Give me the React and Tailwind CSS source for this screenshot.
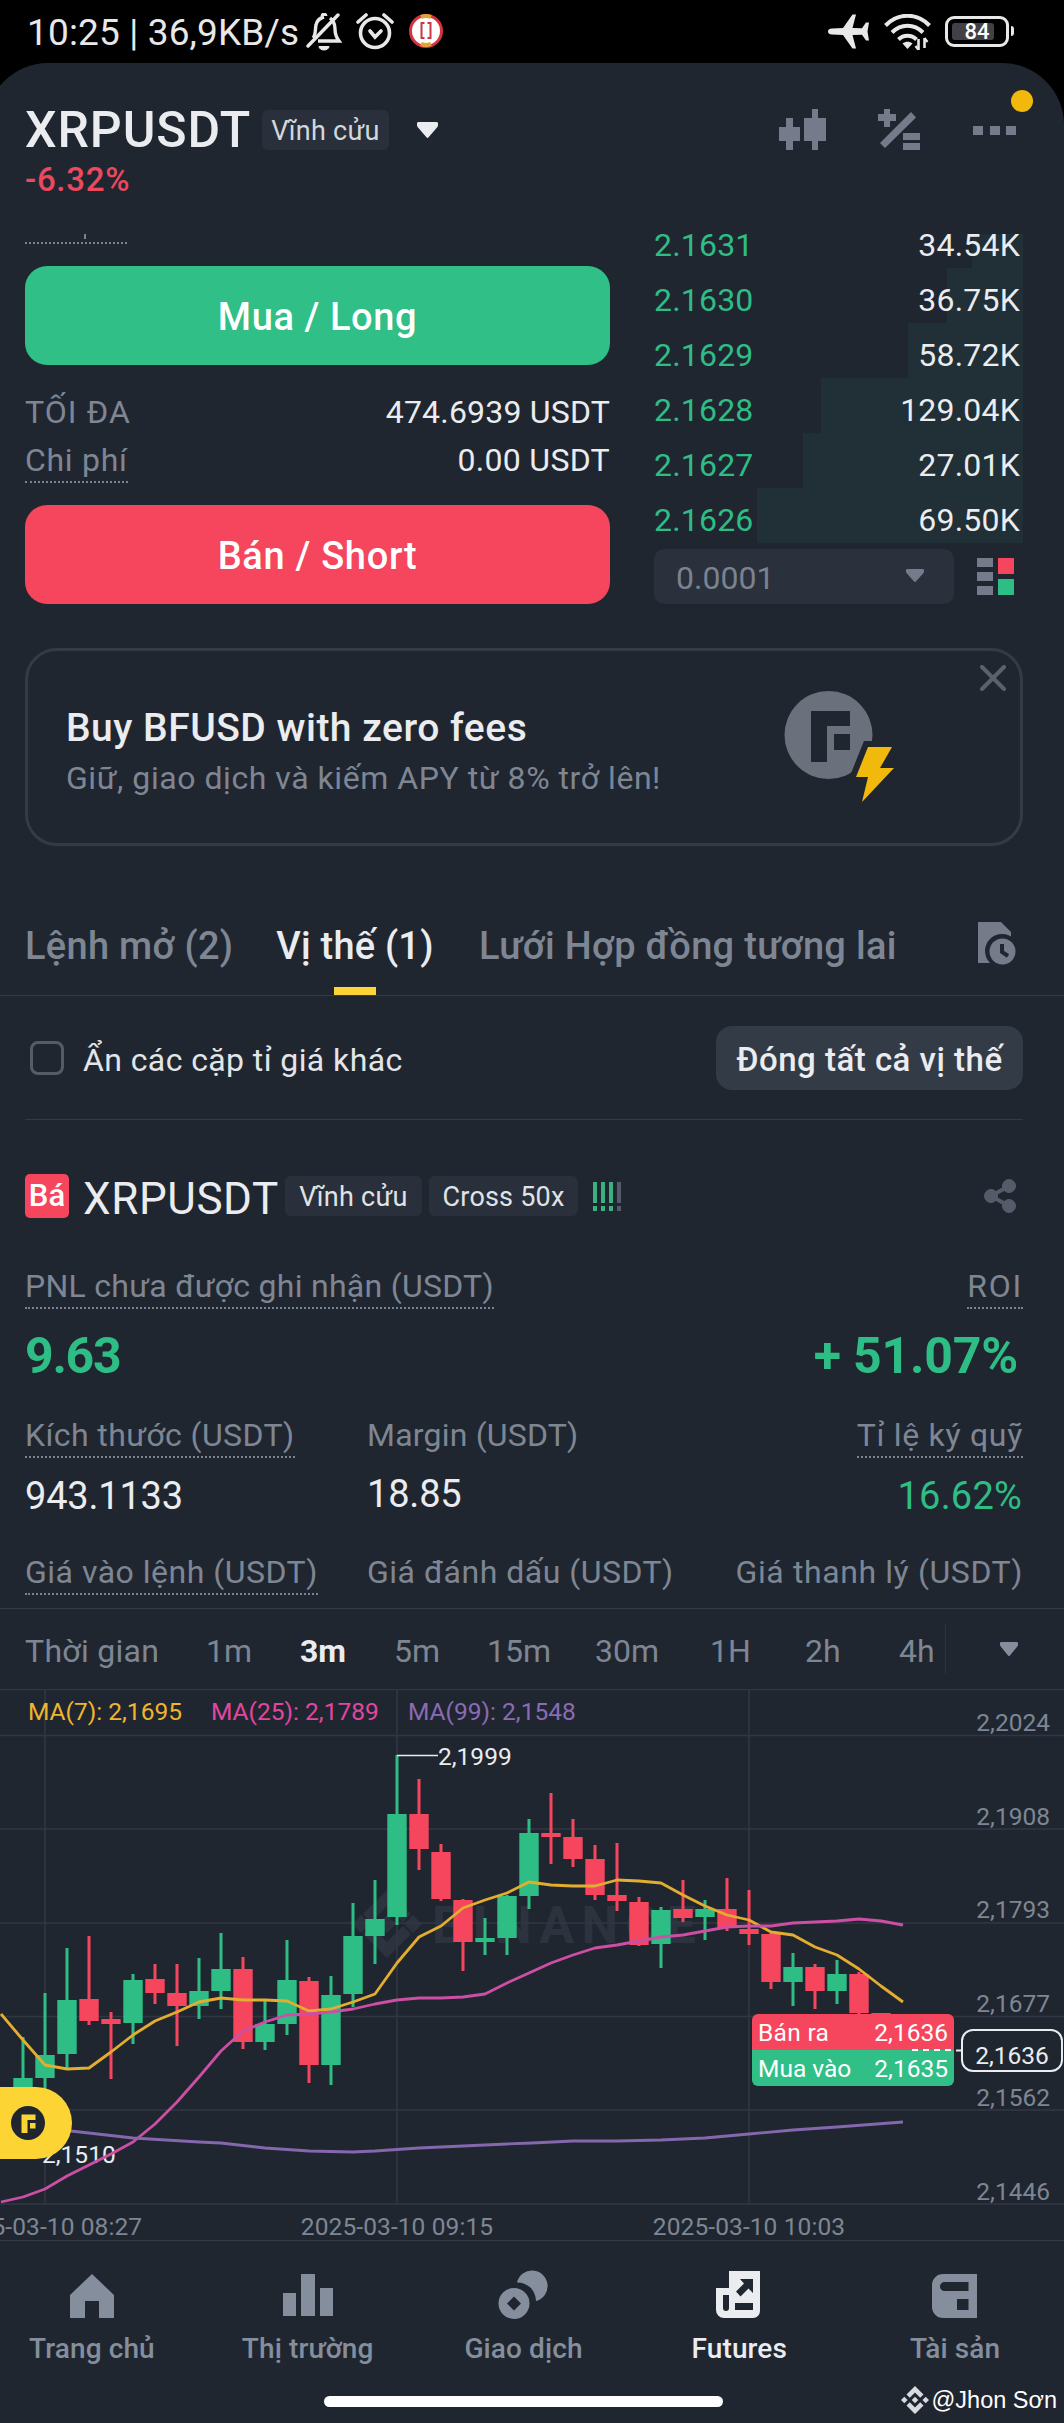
import clsx from 'clsx'

const bids = [
  { price: '2.1631', amount: '34.54K', depth: 51 },
  { price: '2.1630', amount: '36.75K', depth: 76 },
  { price: '2.1629', amount: '58.72K', depth: 115 },
  { price: '2.1628', amount: '129.04K', depth: 202 },
  { price: '2.1627', amount: '27.01K', depth: 220 },
  { price: '2.1626', amount: '69.50K', depth: 266 }
]

const intervals = [
  { label: 'Thời gian', width: 'w-[181px] tracking-[0.300px]' },
  { label: '1m', width: 'w-[94px]' },
  { label: '3m', width: 'w-[94px]', active: true },
  { label: '5m', width: 'w-[93px]' },
  { label: '15m', width: 'w-[108px]' },
  { label: '30m', width: 'w-[115px]' },
  { label: '1H', width: 'w-[95px]' },
  { label: '2h', width: 'w-[94px]' },
  { label: '4h', width: 'w-[46px]' }
]

// [high, body top, body bottom, low, up]
const candles = [
  [2037, 2078, 2098, 2100, 1],
  [1993, 2055, 2078, 2096, 1],
  [1948, 2000, 2054, 2069, 1],
  [1936, 1999, 2021, 2025, 0],
  [2012, 2019, 2024, 2079, 0],
  [1974, 1980, 2023, 2044, 1],
  [1964, 1979, 1993, 2004, 0],
  [1964, 1993, 2006, 2046, 0],
  [1958, 1991, 2006, 2019, 1],
  [1933, 1969, 1991, 2009, 1],
  [1957, 1969, 2042, 2049, 0],
  [1999, 2024, 2042, 2050, 1],
  [1940, 1980, 2024, 2035, 1],
  [1977, 1981, 2065, 2083, 0],
  [1976, 1995, 2065, 2085, 1],
  [1903, 1936, 1994, 2007, 1],
  [1880, 1919, 1936, 1964, 1],
  [1755, 1814, 1917, 1925, 1],
  [1779, 1814, 1849, 1870, 0],
  [1844, 1852, 1899, 1901, 0],
  [1899, 1900, 1942, 1971, 0],
  [1918, 1938, 1942, 1955, 1],
  [1895, 1896, 1938, 1955, 1],
  [1819, 1833, 1896, 1909, 1],
  [1793, 1833, 1837, 1864, 0],
  [1819, 1837, 1859, 1867, 0],
  [1845, 1859, 1895, 1900, 0],
  [1843, 1895, 1901, 1911, 0],
  [1897, 1902, 1945, 1946, 0],
  [1907, 1910, 1944, 1968, 1],
  [1880, 1909, 1918, 1922, 0],
  [1900, 1909, 1917, 1940, 1],
  [1878, 1909, 1928, 1931, 0],
  [1890, 1929, 1934, 1945, 0],
  [1933, 1934, 1982, 1989, 0],
  [1953, 1967, 1982, 2006, 1],
  [1964, 1967, 1991, 2009, 0],
  [1960, 1974, 1991, 2004, 1],
  [1972, 1974, 2013, 2015, 0],
  [2013, 2013, 2018, 2018, 0]
]

const ma7 = [
  2014, 2040, 2065, 2069, 2068, 2052, 2035, 2021, 2012, 2002, 1998, 2000, 2000, 2001, 2011, 2009,
  2002, 1994, 1963, 1937, 1926, 1908, 1900, 1893, 1882, 1885, 1886, 1886, 1880, 1881, 1883, 1895,
  1906, 1915, 1920, 1932, 1935, 1947, 1955, 1969, 1986, 2002
]

const ma25 = [
  2202, 2197, 2189, 2176, 2165, 2154, 2142, 2124, 2102, 2077, 2051, 2031, 2022, 2015, 2014, 2012,
  2009, 2004, 2000, 1998, 1998, 1997, 1994, 1983, 1973, 1963, 1955, 1948, 1945, 1941, 1937, 1935,
  1931, 1927, 1926, 1926, 1923, 1922, 1921, 1919, 1921, 1925
]

const ma99 =
  '60,2129 71,2131 133,2138 199,2142 221,2143 265,2148 309,2151 353,2152 375,2151 419,2148 463,2146 507,2144 532,2143 573,2141 617,2141 661,2140 705,2138 749,2134 793,2130 837,2127 903,2122'

const gridLines = [1735.5, 1829, 1923, 2016.5, 2110, 2204]

const axisLabels = [
  { text: '2,2024', y: 1731 },
  { text: '2,1908', y: 1825 },
  { text: '2,1793', y: 1918 },
  { text: '2,1677', y: 2012 },
  { text: '2,1562', y: 2106 },
  { text: '2,1446', y: 2200 }
]

const toPoints = (values) => values.map((y, i) => `${1 + i * 22},${y}`).join(' ')

const Caret = ({ className }) => (
  <svg viewBox="0 0 21 16" className={className} fill="currentColor" preserveAspectRatio="none">
    <path d="M1.5 0h18a1.5 1.5 0 0 1 1.5 1.6v1.6a3 3 0 0 1-.8 2L11.6 15.3a1.5 1.5 0 0 1-2.2 0L.8 5.2a3 3 0 0 1-.8-2V1.6A1.5 1.5 0 0 1 1.5 0z" />
  </svg>
)

const StatusBar = () => (
  <div className="flex h-[63px] items-start text-[#e8e8e8]">
    <span className="ml-[27px] mt-[3px] w-[279px] whitespace-nowrap text-[37px] leading-[60px] tracking-[0.150px]">10:25 | 36,9KB/s</span>
    <svg viewBox="0 0 36 38" className="mt-[13px] h-[38px] w-[36px]" fill="none" stroke="currentColor" strokeWidth="3.4">
      <path d="M7 25c3-3 2-9 3-13 1-5 4-7 8-8M24 5c4 3 5 6 5 11 0 5 1 8 4 12H12" />
      <path d="M32 2 2 33" strokeLinecap="round" />
      <path d="M15 3a3 3 0 0 1 6 0M13 33.5a5 3.5 0 0 0 10 0z" fill="currentColor" strokeWidth="1" />
    </svg>
    <svg viewBox="0 0 40 38" className="ml-[13px] mt-[13px] h-[38px] w-[40px]" fill="none" stroke="currentColor" strokeWidth="3.6" strokeLinecap="round">
      <circle cx="20" cy="20" r="14.5" />
      <path d="M3 9l8-7M37 9l-8-7" />
      <path d="M15 18l5 6 6-6" />
    </svg>
    <svg viewBox="0 0 34 34" className="ml-[14px] mt-[14px] h-[34px] w-[34px]">
      <circle cx="17" cy="17" r="15.5" fill="#fff" stroke="#d6343d" strokeWidth="3" />
      <path d="M12 3a15 15 0 0 1 10 0M12 30a15 15 0 0 0 10 0" stroke="#e0a23c" strokeWidth="4" fill="none" />
      <path d="M15.500 9h-3v15h3M18.500 9h3v15h-3" stroke="#c63a40" strokeWidth="2" fill="none" />
    </svg>

    <svg viewBox="0 0 41 35" className="ml-auto mt-[14px] h-[35px] w-[41px]" fill="currentColor">
      <path d="M0 17.500c0-2 1.500-3 4-3L15 14 24.500 0.500H28L24.500 14l9.500.3 4-5.800h3L39.500 17.500 41 26.500h-3l-4-5.800-9.500.3L28 34.500h-3.500L15 21 4 20.500c-2.500 0-4-1-4-3z" />
    </svg>
    <svg viewBox="0 0 47 36" className="ml-[15px] mt-[14px] h-[36px] w-[47px]" fill="none" stroke="currentColor" strokeWidth="4">
      <path d="M1.500 11.500C14-1.500 33-1.500 45.500 11.500" />
      <path d="M8 18.500c9-9 22-9 31 0" />
      <path d="M14.500 25.500c5-5 13-5 18 0" />
      <path d="M23.500 35l-5-5.500c3-2.500 7-2.500 10 0z" fill="currentColor" stroke="none" />
      <path d="M34.500 25v11M40.500 24v10" strokeWidth="2.600" />
      <path d="M31.500 32l3 4M43.500 28l-3-4" strokeWidth="2.200" />
    </svg>
    <div className="ml-[14px] mt-[16px] flex h-[31px] w-[64px] items-center rounded-[9px] border-[3px] border-[#e8e8e8] p-[4px]">
      <div className="flex h-full w-[42px] items-center justify-center rounded-[3px] bg-[#433f47] pl-2 text-[22px] font-medium leading-none text-white">
        84
      </div>
    </div>
    <div className="ml-[2px] mr-[50px] mt-[26px] h-[10px] w-[3px] rounded-r bg-[#e8e8e8]" />
  </div>
)

const Header = () => (
  <header className="relative -ml-[14px] h-[171px] w-[1078px] rounded-t-[62px] bg-[#202630] pl-[39px] pt-[37px]">
    <div className="flex h-[60px] items-center">
      <h1 className="w-[237px] whitespace-nowrap text-[50px] font-medium leading-[60px] tracking-[0.900px] text-[#eaecef]">XRPUSDT</h1>
      <span className="h-10 w-[127px] rounded-md bg-[#29303b] text-center text-[27px] leading-[42px] tracking-[0.300px] text-[#d3d7dc]">Vĩnh cửu</span>
      <Caret className="ml-[28px] h-4 w-[21px] text-[#eaecef]" />
      <svg viewBox="0 0 47 42" className="ml-auto h-[42px] w-[47px] text-[#757b8a]" fill="currentColor">
        <path d="M0 18h7V9h7v9h7v14h-7v9H7v-9H0zM25 9h8V0h6v9h8v23h-8v9h-6v-9h-8z" />
      </svg>
      <svg viewBox="0 0 42 42" className="ml-[52px] h-[42px] w-[42px] text-[#757b8a]" fill="currentColor">
        <path d="M6 0h6v5h6v7h-6v6H6v-6H0V5h6zM33 3l5 5.500L7 39l-5-5zM25 24h17v7H25zM25 34h17v7H25z" />
      </svg>
      <div className="ml-[53px] mr-[48px] flex w-[43px] justify-between">
        <i className="h-[9px] w-[10px] bg-[#757b8a]" />
        <i className="h-[9px] w-[10px] bg-[#757b8a]" />
        <i className="h-[9px] w-[10px] bg-[#757b8a]" />
      </div>
    </div>
    <div className="mt-1 text-[33px] font-medium leading-8 tracking-[0.700px] text-[#ec485e]">-6.32%</div>
    <i className="absolute right-[31px] top-[27px] size-[22px] rounded-full bg-[#f0b90b]" />
  </header>
)

const OrderForm = () => (
  <div className="w-[585px]">
    <div className="h-[10px] w-[102px] border-b-2 border-dotted border-[#7b8392]">
      <div className="ml-[59px] h-[5px] w-[2px] bg-[#7b8392]" />
    </div>
    <button className="mt-[22px] block h-[99px] w-full rounded-[22px] bg-[#2fbf87] pt-[3px] text-[38px] font-medium tracking-[0.600px] text-white">
      Mua / Long
    </button>
    <div className="mt-[31px] flex justify-between text-[32px] leading-8">
      <span className="tracking-[1.100px] text-[#7e8694]">TỐI ĐA</span>
      <span className="tracking-[0.200px] text-[#eaecef]">474.6939 USDT</span>
    </div>
    <div className="mt-4 flex h-[39px] justify-between text-[32px] leading-8">
      <span className="border-b-2 border-dotted border-[#7b8392] tracking-[0.700px] text-[#7e8694]">Chi phí</span>
      <span className="tracking-[0.300px] text-[#eaecef]">0.00 USDT</span>
    </div>
    <button className="mt-[22px] block h-[99px] w-full rounded-[22px] bg-[#f6465d] pt-[3px] text-[38px] font-medium tracking-[0.700px] text-white">
      Bán / Short
    </button>
  </div>
)

const OrderBook = () => (
  <div className="w-[369px]">
    <div className="h-[309px] overflow-hidden">
      <div className="-mt-[21px]">
        {bids.map((bid) => (
          <div key={bid.price} className="relative h-[55px]">
            <div className="absolute inset-y-0 right-0 bg-[#212f36]" style={{ width: bid.depth }} />
            <div className="relative flex justify-between pr-[3px] pt-[21px] text-[32px] leading-[22px]">
              <span className="tracking-[0.200px] text-[#2ebd85]">{bid.price}</span>
              <span className="tracking-[0.200px] text-[#eaecef]">{bid.amount}</span>
            </div>
          </div>
        ))}
      </div>
    </div>
    <div className="mt-[6px] flex h-[55px] items-center">
      <div className="flex h-full w-[300px] items-center justify-between rounded-[10px] bg-[#2a303c] pl-[22px] pr-[30px] pt-[2px] text-[32px] text-[#7b8290]">
        0.0001
        <Caret className="mb-[4px] h-[13px] w-[18px] text-[#757b8a]" />
      </div>
      <div className="ml-[23px] flex gap-[5px]">
        <div className="flex flex-col gap-[5px]">
          <i className="h-[9px] w-4 bg-[#757b8a]" />
          <i className="h-[9px] w-4 bg-[#757b8a]" />
          <i className="h-[9px] w-4 bg-[#757b8a]" />
        </div>
        <div className="flex flex-col gap-[5px]">
          <i className="h-4 w-4 bg-[#f6465d]" />
          <i className="h-4 w-4 bg-[#2ebd85]" />
        </div>
      </div>
    </div>
  </div>
)

const PromoCard = () => (
  <div className="relative ml-[25px] flex h-[198px] w-[998px] rounded-[32px] border-[3px] border-[#333b47]">
    <div className="flex-1 whitespace-nowrap pl-[38px] pt-[52px]">
      <h2 className="text-[39px] font-medium leading-[50px] tracking-[0.500px] text-[#eaecef]">Buy BFUSD with zero fees</h2>
      <p className="mt-[5px] text-[32px] leading-10 tracking-[0.550px] text-[#7e8694]">Giữ, giao dịch và kiếm APY từ 8% trở lên!</p>
    </div>
    <svg viewBox="784 690 112 114" className="mr-[124px] mt-[39px] h-[114px] w-[112px]">
      <circle cx="828.500" cy="735" r="44" fill="#6a707c" />
      <path d="M811 711h39v15h-23v36h-16zM834 734h16v16h-16z" fill="#202630" />
      <path d="M868 747h24l-12 21h14l-32 34 6-25h-12z" fill="#f0b90b" stroke="#202630" strokeWidth="12" />
      <path d="M868 747h24l-12 21h14l-32 34 6-25h-12z" fill="#f0b90b" />
    </svg>
    <svg viewBox="0 0 26 26" className="absolute right-[14px] top-[14px] size-[26px]" stroke="#5a616d" strokeWidth="4" strokeLinecap="round">
      <path d="M2 2l22 22M24 2L2 24" />
    </svg>
  </div>
)

const Tabs = () => (
  <div className="mt-[72px] flex h-[78px] whitespace-nowrap border-b border-[#333b47] pl-[25px] text-[38px] font-medium leading-[57px] text-[#7e8694]">
    <div className="w-[251px] tracking-[0.300px]">Lệnh mở (2)</div>
    <div className="flex w-[158px] flex-col items-center justify-between tracking-[0.200px] text-[#eaecef]">
      Vị thế (1)
      <i className="h-2 w-[42px] bg-[#fcd535]" />
    </div>
    <div className="ml-[45px] tracking-[0.300px]">Lưới Hợp đồng tương lai</div>
    <svg viewBox="0 0 38 43" className="ml-auto mr-[48px] mt-[4px] h-[43px] w-[38px]">
      <path d="M0 0h23l10 10v14H18v17H0z" fill="#757b8a" />
      <circle cx="24" cy="29" r="17" fill="#202630" />
      <circle cx="24.500" cy="29.500" r="13" fill="#757b8a" />
      <path d="M24 22v8l6 4" stroke="#202630" strokeWidth="4" fill="none" />
    </svg>
  </div>
)

const FilterRow = () => (
  <div className="mx-[25px] mr-[41px] flex h-[124px] items-center border-b border-[#333b47] pl-[5px]">
    <i className="size-[34px] rounded-[8px] border-[3px] border-[#555c69]" />
    <span className="ml-[19px] mt-[4px] text-[32px] tracking-[0.400px] text-[#e3e5e8]">Ẩn các cặp tỉ giá khác</span>
    <button className="ml-auto h-16 w-[307px] rounded-2xl bg-[#333b47] pt-[4px] text-[33px] font-medium tracking-[0.500px] text-[#eaecef]">
      Đóng tất cả vị thế
    </button>
  </div>
)

const Label = ({ children, dotted, tracking = 'tracking-[0.500px]', className = '' }) => (
  <span
    className={clsx(
      'h-[39px] whitespace-nowrap text-[32px] leading-8 text-[#7e8694]',
      tracking,
      dotted && 'border-b-2 border-dotted border-[#7b8392]',
      className
    )}
  >
    {children}
  </span>
)

const Position = () => (
  <section className="ml-[25px] w-[998px] pt-[54px]">
    <div className="flex h-11 items-center">
      <span className="w-11 rounded-[5px] bg-[#f6465d] text-center text-[31px] font-medium leading-[44px] text-white">Bá</span>
      <span className="ml-[14px] mt-[5px] w-[202px] whitespace-nowrap text-[44px] leading-[48px] tracking-[0.600px] text-[#eaecef]">XRPUSDT</span>
      <span className="h-10 w-[137px] rounded-md bg-[#29303b] text-center text-[27px] leading-[43px] tracking-[0.300px] text-[#e0e3e6]">Vĩnh cửu</span>
      <span className="ml-[7px] h-10 w-[149px] rounded-md bg-[#29303b] text-center text-[27px] leading-[43px] tracking-[0.200px] text-[#e0e3e6]">Cross 50x</span>
      <svg viewBox="0 0 29 29" className="ml-[15px] h-[29px] w-[29px]">
        <path d="M0 0h4v21H0zM8 0h4v21H8zM16 0h4v21h-4zM0 24h4v5H0zM8 24h4v5H8zM16 24h4v5h-4z" fill="#3bb080" />
        <path d="M24 0h4v21h-4zM24 24h4v5h-4z" fill="#555c69" />
      </svg>
      <svg viewBox="0 0 32 34" className="ml-auto mr-[7px] h-[34px] w-8" fill="#555c69" stroke="#555c69">
        <circle cx="7" cy="17" r="6.500" />
        <circle cx="25" cy="7" r="6.500" />
        <circle cx="25" cy="27" r="6.500" />
        <path d="M25 7L7 17l18 10" fill="none" strokeWidth="4" />
      </svg>
    </div>

    <div className="mt-[52px] flex justify-between">
      <Label dotted tracking="tracking-[0.280px]">PNL chưa được ghi nhận (USDT)</Label>
      <Label dotted tracking="tracking-[1.800px]">ROI</Label>
    </div>
    <div className="mt-[22px] flex justify-between pr-[5px] text-[50px] font-bold leading-[50px] text-[#2ebd85]">
      <span className="tracking-[-1.300px]">9.63</span>
      <span className="tracking-[-0.200px]">+ 51.07%</span>
    </div>

    <div className="mt-[38px] flex">
      <div className="flex w-[342px]">
        <Label dotted tracking="tracking-[0.400px]">Kích thước (USDT)</Label>
      </div>
      <Label tracking="tracking-[0.200px]">Margin (USDT)</Label>
      <Label dotted tracking="tracking-[0.700px]" className="ml-auto">Tỉ lệ ký quỹ</Label>
    </div>
    <div className="mt-[18px] flex h-[38px] text-[38px] leading-10 text-[#eaecef]">
      <span className="w-[342px] tracking-[-0.200px]">943.1133</span>
      <span className="-mt-[2px] tracking-[-0.200px]">18.85</span>
      <span className="ml-auto mr-px tracking-[0.200px] text-[#2ebd85]">16.62%</span>
    </div>

    <div className="mt-[42px] flex">
      <div className="flex w-[342px]">
        <Label dotted>Giá vào lệnh (USDT)</Label>
      </div>
      <Label>Giá đánh dấu (USDT)</Label>
      <Label tracking="tracking-[0.600px]" className="ml-auto">Giá thanh lý (USDT)</Label>
    </div>
  </section>
)

const IntervalBar = () => (
  <div className="mt-[13px] flex h-[81px] items-center border-t border-[#333b47] pl-[25px] text-[32px] text-[#7e8694]">
    {intervals.map((item) => (
      <span
        key={item.label}
        className={clsx('whitespace-nowrap pt-1', item.width, item.active && 'font-bold text-[#eaecef]')}
      >
        {item.label}
      </span>
    ))}
    <i className="ml-auto h-[50px] w-px bg-[#2d3440]" />
    <Caret className="ml-[54px] mr-[46px] h-[14px] w-[18px] text-[#848e9c]" />
  </div>
)

const Chart = () => (
  <div className="relative h-[551px]">
    <svg viewBox="0 1689 1064 551" className="block h-[551px] w-[1064px]" fontSize="24.5">
      <g fill="#2c333e">
        <path d="M387 1890l24 24-8 8-16-16-16 16-8-8zM387 1958l24-24-8-8-16 16-16-16-8 8zM387 1915l9 9-9 9-9-9zM361 1915l9 9-9 9-9-9zM413 1915l9 9-9 9-9-9z" />
        <text x="432" y="1943" fontSize="52" fontWeight="700" textLength="264">BINANCE</text>
      </g>
      <g stroke="#303743" strokeWidth="1.500">
        <path d="M0 1689.500h1064M45 1690v514M397 1690v514M749 1690v514" />
        {gridLines.map((y) => (
          <path key={y} d={`M0 ${y}h1064`} />
        ))}
      </g>

      <text x="28" y="1720" fill="#f0b52f">MA(7): 2,1695</text>
      <text x="211" y="1720" fill="#e2479f">MA(25): 2,1789</text>
      <text x="408" y="1720" fill="#8a6bb5">MA(99): 2,1548</text>

      {candles.map(([high, top, bottom, low, up], i) => {
        const x = 23 + i * 22
        const color = up ? '#2ebd85' : '#f6465d'
        return (
          <g key={i} fill={color}>
            <rect x={x - 1.5} y={high} width="3" height={low - high} />
            <rect x={x - 9.7} y={top} width="19.4" height={bottom - top} />
          </g>
        )
      })}

      <path d="M397 1755.500h41" stroke="#eaecef" strokeWidth="1.500" />
      <text x="438" y="1765" fontSize="24.500" fill="#eaecef">2,1999</text>
      <text x="42" y="2163" fontSize="24.500" fill="#eaecef">2,1510</text>

      <g fill="none" strokeWidth="2.800" strokeLinejoin="round">
        <polyline points={toPoints(ma7)} stroke="#e3ae30" />
        <polyline points={toPoints(ma25)} stroke="#cd4fa5" />
        <polyline points={ma99} stroke="#8467ad" />
      </g>

      <g fill="#7e8694" fontSize="24.500">
        {axisLabels.map((label) => (
          <text key={label.text} x="1050" y={label.y} textAnchor="end">{label.text}</text>
        ))}
      </g>
      <g fill="#7e8694" textAnchor="middle" letterSpacing="0.1">
        <text x="46" y="2235">2025-03-10 08:27</text>
        <text x="397" y="2235">2025-03-10 09:15</text>
        <text x="749" y="2235">2025-03-10 10:03</text>
      </g>
      <path d="M956 2050.500h8" stroke="#eaecef" strokeWidth="2" />
    </svg>

    <div className="absolute left-[752px] top-[325px] w-[202px] overflow-hidden rounded-[6px] text-[24.500px] leading-[38px] text-white">
      <div className="flex h-9 justify-between bg-[#f6465d] px-[6px]">
        <span className="tracking-[0.300px]">Bán ra</span>
        <span>2,1636</span>
      </div>
      <div className="flex h-9 justify-between bg-[#2fbf87] px-[6px]">
        <span>Mua vào</span>
        <span>2,1635</span>
      </div>
    </div>
    <div className="absolute left-[912px] top-[360px] flex gap-[5px]">
      <i className="h-[2px] w-[6px] bg-white" />
      <i className="h-[2px] w-[6px] bg-white" />
      <i className="h-[2px] w-[6px] bg-white" />
      <i className="h-[2px] w-[6px] bg-white" />
    </div>
    <div className="absolute left-[961px] top-[340px] h-[43px] w-[102px] rounded-[12px] border-2 border-[#eaecef] bg-[#202630] pt-[6px] text-center text-[24.500px] leading-[38px] text-[#eaecef]">
      2,1636
    </div>
    <div className="absolute left-0 top-[398px] flex h-[72px] w-[72px] items-center rounded-r-full bg-[#fcd535] pl-[11px]">
      <svg viewBox="0 0 34 34" className="size-[34px]">
        <circle cx="17" cy="17" r="17" fill="#202630" />
        <path d="M10.500 8.500h14v5.500h-8v13h-6zM19 17h5.500v5.500H19z" fill="#fcd535" />
      </svg>
    </div>
  </div>
)

const navItems = [
  {
    label: 'Trang chủ',
    icon: <path d="M24 3l22 21v23H31V30H17v17H2V24z" />
  },
  {
    label: 'Thị trường',
    icon: <path d="M-1 22h13v23H-1zM17 3h14v42H17zM36 17h13v28H36z" />
  },
  {
    label: 'Giao dịch',
    icon: (
      <>
        <path d="M18 11.500A15.500 15.500 0 1 1 37 30C36.500 19 29 11.500 18 11.500z" />
        <path fillRule="evenodd" d="M15 17a15.500 15.500 0 1 0 0 31 15.500 15.500 0 1 0 0-31zM15 25.500l7 7-7 7-7-7z" />
      </>
    )
  },
  {
    label: 'Futures',
    active: true,
    icon: (
      <>
        <path fillRule="evenodd" d="M14 0h31v40a7 7 0 0 1-7 7H9a8 8 0 0 1-8-8V17h13zM8 24v13a3 3 0 0 0 6 0V24zM20 32v7h18v-7z" />
        <path d="M25 8h13v14l-4.500-4.500-8 8L21 20.500l8-8z" fill="#202630" />
      </>
    )
  },
  {
    label: 'Tài sản',
    icon: (
      <path fillRule="evenodd" d="M12 3h34v44H12A11 11 0 0 1 1 36V14A11 11 0 0 1 12 3zM13.500 11a4.500 4.500 0 0 0 0 9H37.500V11zM26 28v11h11.500V28z" />
    )
  }
]

const BottomNav = () => (
  <nav className="h-[183px] border-t border-[#333b47]">
    <div className="-ml-[16px] grid w-[1079px] grid-cols-5">
      {navItems.map((item) => (
        <div
          key={item.label}
          className={clsx('flex flex-col items-center pt-[30px]', item.active ? 'text-[#eaecef]' : 'text-[#848e9c]')}
        >
          <svg viewBox="0 0 48 50" className="h-[50px] w-12 overflow-visible" fill="currentColor">
            {item.icon}
          </svg>
          <span className="mt-[10px] text-[28px] font-medium leading-9 tracking-[0.100px]">{item.label}</span>
        </div>
      ))}
    </div>
    <div className="ml-[324px] mt-[29px] h-[11px] w-[399px] rounded-full bg-white" />
  </nav>
)

export default function App() {
  return (
    <div className="relative h-[2423px] w-[1064px] overflow-hidden bg-black font-[Roboto,sans-serif]">
      <StatusBar />
      <Header />
      <main className="h-[2189px] bg-[#202630]">
        <div className="flex h-[414px] gap-11 pl-[25px]">
          <OrderForm />
          <OrderBook />
        </div>
        <PromoCard />
        <Tabs />
        <FilterRow />
        <Position />
        <IntervalBar />
        <Chart />
        <BottomNav />
      </main>
      <div className="absolute bottom-[8px] right-[7px] flex items-center font-['Liberation_Sans',sans-serif] text-[23.500px] leading-[30px] text-white">
        <svg viewBox="0 0 28 28" className="mr-[3px] size-7" fill="#d9dadd">
          <path d="M14 0l8.500 8.500-3.300 3.300L14 6.600l-5.200 5.200-3.300-3.300zM14 28l8.500-8.500-3.300-3.300-5.200 5.200-5.200-5.200-3.300 3.300zM14 10.700l3.300 3.300-3.300 3.300-3.300-3.300zM3.300 10.700L6.600 14l-3.300 3.300L0 14zM24.700 10.700L28 14l-3.300 3.300-3.300-3.300z" />
        </svg>
        @Jhon Sơn
      </div>
    </div>
  )
}
